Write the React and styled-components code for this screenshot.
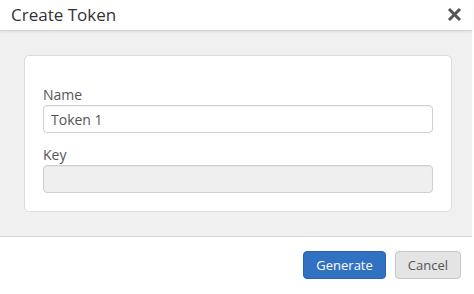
import React from "react";
import styled, { createGlobalStyle } from "styled-components";

const Global = createGlobalStyle`
  html, body { margin: 0; padding: 0; background: #fff; }
  body { font-family: "Open Sans", "Liberation Sans", sans-serif; }
  * { box-sizing: border-box; }
`;

const Modal = styled.div`
  width: 472px;
  height: 294px;
  display: flex;
  flex-direction: column;
  background: #fff;
`;

const Header = styled.div`
  height: 31px;
  display: flex;
  align-items: center;
  justify-content: space-between;
  padding: 0 10px 1px 11px;
  border-bottom: 1px solid #d6d6d6;
  box-shadow: 0 1px 2px rgba(0, 0, 0, 0.08);
  position: relative;
  z-index: 1;
`;

const Title = styled.h1`
  margin: 0;
  font-size: 17px;
  font-weight: 400;
  color: #333;
  line-height: 22px;
`;

const Close = styled.button`
  border: 0;
  background: none;
  padding: 0;
  width: 16px;
  height: 16px;
  display: flex;
  align-items: center;
  justify-content: center;
  cursor: pointer;
`;

const Body = styled.div`
  background: #f0f0f0;
  padding: 24px 20px 24px 24px;
  border-bottom: 1px solid #d8d8d8;
`;

const Card = styled.div`
  background: #fff;
  border: 1px solid #dcdcdc;
  border-radius: 5px;
  padding: 29px 18px 18px;
  display: flex;
  flex-direction: column;
`;

const Label = styled.label`
  font-size: 14px;
  line-height: 20px;
  color: #555;
  margin-top: ${(p) => (p.$first ? "0" : "12px")};
`;

const Input = styled.input`
  height: 28px;
  width: 100%;
  border: 1px solid #cfcfcf;
  border-radius: 4px;
  padding: 0 7px;
  font-family: inherit;
  font-size: 14px;
  color: #555;
  background: ${(p) => (p.disabled ? "#efefef" : "#fff")};
  box-shadow: inset 0 1px 1px rgba(0, 0, 0, 0.04);
  outline: none;
`;

const Footer = styled.div`
  flex: 1;
  display: flex;
  justify-content: flex-end;
  align-items: flex-start;
  gap: 9px;
  padding: 14px 11px 0 0;
`;

const Button = styled.button`
  height: 28px;
  padding: 0 12px;
  border-radius: 4px;
  font-family: inherit;
  font-size: 13px;
  border: 1px solid ${(p) => (p.$primary ? "#2a64ad" : "#c6c6c6")};
  background: ${(p) => (p.$primary ? "#3171c1" : "#e4e4e4")};
  color: ${(p) => (p.$primary ? "#fff" : "#555")};
  cursor: pointer;
`;

export default function App() {
  return (
    <>
      <Global />
      <Modal>
        <Header>
          <Title>Create Token</Title>
          <Close aria-label="Close">
            <svg width="15" height="15" viewBox="0 0 15 15">
              <path d="M2 2 L13 13 M13 2 L2 13" stroke="#555" strokeWidth="3" strokeLinecap="butt" />
            </svg>
          </Close>
        </Header>
        <Body>
          <Card>
            <Label $first>Name</Label>
            <Input defaultValue="Token 1" />
            <Label>Key</Label>
            <Input disabled />
          </Card>
        </Body>
        <Footer>
          <Button $primary>Generate</Button>
          <Button>Cancel</Button>
        </Footer>
      </Modal>
    </>
  );
}
